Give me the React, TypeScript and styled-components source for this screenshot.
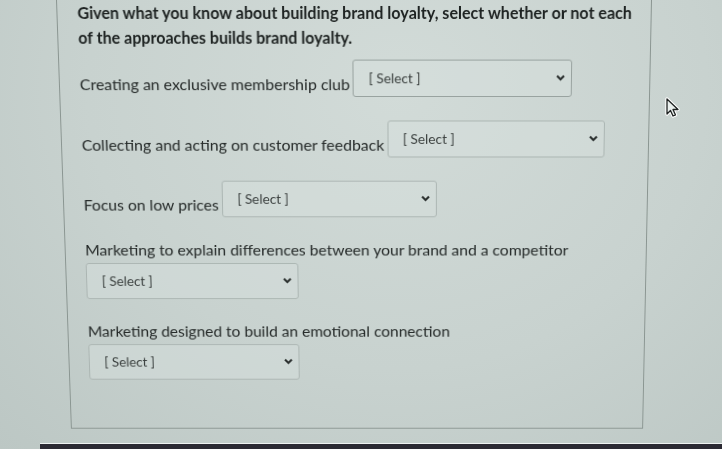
import React from "react";
import styled, { createGlobalStyle } from "styled-components";

const Global = createGlobalStyle`
  html, body { margin: 0; padding: 0; }
  body {
    background: #c6d0cd;
    font-family: Lato, "Open Sans", "Liberation Sans", sans-serif;
    -webkit-font-smoothing: antialiased;
  }
`;

const Screen = styled.div`
  position: relative;
  width: 722px;
  height: 449px;
  overflow: hidden;
  display: flex;
  flex-direction: column;
  background: radial-gradient(ellipse at 55% 20%, #d2dbd8 0%, #c8d2cf 55%, #bcc7c4 100%);
`;

/* the photo was taken at a slight angle: the panel is drawn flat and tilted back */
const Panel = styled.section`
  box-sizing: border-box;
  flex: none;
  margin-left: 56px;
  margin-bottom: -20px;
  width: 596px;
  height: 447px;
  border: 1px solid #8a9591;
  border-top: none;
  padding: 0 0 0 20px;
  display: flex;
  flex-direction: column;
  transform-origin: 298px 0;
  transform: perspective(500px) rotateX(-2.67deg) skewX(0.4deg);
  will-change: transform;
  outline: 1px solid transparent;
`;

const Prompt = styled.p`
  margin: 0;
  font-weight: 700;
  font-size: 16.1px;
  line-height: 25px;
  color: #1d2221;
  width: 566px;
`;

const InlineRow = styled.div<{ $top: number }>`
  display: flex;
  align-items: flex-start;
  gap: 3px;
  margin-top: ${(p) => p.$top}px;
`;

const StackRow = styled.div<{ $top: number }>`
  display: flex;
  flex-direction: column;
  align-items: flex-start;
  gap: 4px;
  margin-top: ${(p) => p.$top}px;
`;

const Label = styled.span<{ $inline?: boolean }>`
  font-size: 16px;
  line-height: 20px;
  color: #252a29;
  white-space: nowrap;
  padding-top: ${(p) => (p.$inline ? 15 : 0)}px;
`;

const SelectBox = styled.div<{ $w: number; $strong?: boolean }>`
  box-sizing: border-box;
  width: ${(p) => p.$w}px;
  height: 38px;
  border: 1px solid ${(p) => (p.$strong ? "#98a29f" : "#abb5b2")};
  border-radius: 3px;
  background: rgba(215, 224, 221, 0.45);
  display: flex;
  align-items: flex-start;
  justify-content: space-between;
  padding: 9px 6px 0 15px;
  font-size: 13.8px;
  line-height: 18px;
  color: #393e3d;
`;

const Chevron = styled.svg`
  margin-top: 5px;
  width: 9px;
  height: 7px;
`;

const BottomBar = styled.div`
  margin-top: auto;
  margin-left: 40px;
  height: 5px;
  border-top: 1px solid #eef2f1;
  background: #2b2a33;
`;

const Cursor = styled.svg`
  position: absolute;
  left: 664px;
  top: 97px;
  width: 17px;
  height: 22px;
`;

function Select({ w, strong }: { w: number; strong?: boolean }) {
  return (
    <SelectBox $w={w} $strong={strong}>
      <span>[ Select ]</span>
      <Chevron viewBox="0 0 9 7">
        <path d="M1 1.5 L4.5 5 L8 1.5" fill="none" stroke="#2a2f2e" strokeWidth="2.2" />
      </Chevron>
    </SelectBox>
  );
}

export default function App() {
  return (
    <>
      <Global />
      <Screen>
        <Panel>
          <Prompt>
            Given what you know about building brand loyalty, select whether or not each of the
            approaches builds brand loyalty.
          </Prompt>
          <InlineRow $top={10}>
            <Label $inline>Creating an exclusive membership club</Label>
            <Select w={221} strong />
          </InlineRow>
          <InlineRow $top={24}>
            <Label $inline>Collecting and acting on customer feedback</Label>
            <Select w={220} />
          </InlineRow>
          <InlineRow $top={24}>
            <Label $inline>Focus on low prices</Label>
            <Select w={219} />
          </InlineRow>
          <StackRow $top={24}>
            <Label>Marketing to explain differences between your brand and a competitor</Label>
            <Select w={218} />
          </StackRow>
          <StackRow $top={24}>
            <Label>Marketing designed to build an emotional connection</Label>
            <Select w={218} />
          </StackRow>
        </Panel>
        <BottomBar />
        <Cursor viewBox="0 0 17 22">
          <path
            d="M3 2 L3 17 L6.5 13.5 L9 19 L11.5 18 L9 12.5 L14 12.5 Z"
            fill="#e9efed"
            stroke="#ffffff"
            strokeWidth="3.4"
            strokeLinejoin="round"
          />
          <path
            d="M3 2 L3 17 L6.5 13.5 L9 19 L11.5 18 L9 12.5 L14 12.5 Z"
            fill="#e9efed"
            stroke="#1e2221"
            strokeWidth="1.3"
            strokeLinejoin="round"
          />
        </Cursor>
      </Screen>
    </>
  );
}
